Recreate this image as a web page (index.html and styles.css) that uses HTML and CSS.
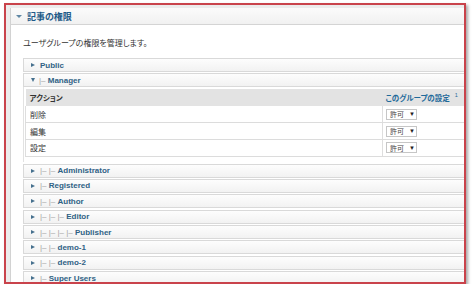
FILE: index.html
```html
<!DOCTYPE html>
<html lang="ja">
<head>
    <meta charset="UTF-8">
    <title>記事の権限</title>
    <link rel="stylesheet" href="styles.css">
</head>
<body>
    <div class="frame">
        <div class="panel">
            <div class="panel-head"><span class="caret"></span>記事の権限</div>
            <div class="panel-body">
                <p class="desc">ユーザグループの権限を管理します。</p>
                <ul class="groups">
                    <li class="group">
                        <div class="group-head"><span class="tri"></span><span class="name">Public</span></div>
                    </li>
                    <li class="group open">
                        <div class="group-head"><span class="tri down"></span><span class="lvl">|– </span><span class="name">Manager</span></div>
                        <div class="rules-wrap">
                            <table class="rules">
                                <thead>
                                    <tr>
                                        <th class="col-action">アクション</th>
                                        <th class="col-setting">このグループの設定<sup>1</sup></th>
                                    </tr>
                                </thead>
                                <tbody>
                                    <tr>
                                        <td>削除</td>
                                        <td class="col-setting"><span class="select">許可<i>▼</i></span></td>
                                    </tr>
                                    <tr>
                                        <td>編集</td>
                                        <td class="col-setting"><span class="select">許可<i>▼</i></span></td>
                                    </tr>
                                    <tr>
                                        <td>設定</td>
                                        <td class="col-setting"><span class="select">許可<i>▼</i></span></td>
                                    </tr>
                                </tbody>
                            </table>
                        </div>
                    </li>
                    <li class="group">
                        <div class="group-head"><span class="tri"></span><span class="lvl">|– |– </span><span class="name">Administrator</span></div>
                    </li>
                    <li class="group">
                        <div class="group-head"><span class="tri"></span><span class="lvl">|– </span><span class="name">Registered</span></div>
                    </li>
                    <li class="group">
                        <div class="group-head"><span class="tri"></span><span class="lvl">|– |– </span><span class="name">Author</span></div>
                    </li>
                    <li class="group">
                        <div class="group-head"><span class="tri"></span><span class="lvl">|– |– |– </span><span class="name">Editor</span></div>
                    </li>
                    <li class="group">
                        <div class="group-head"><span class="tri"></span><span class="lvl">|– |– |– |– </span><span class="name">Publisher</span></div>
                    </li>
                    <li class="group">
                        <div class="group-head"><span class="tri"></span><span class="lvl">|– |– </span><span class="name">demo-1</span></div>
                    </li>
                    <li class="group">
                        <div class="group-head"><span class="tri"></span><span class="lvl">|– |– </span><span class="name">demo-2</span></div>
                    </li>
                    <li class="group">
                        <div class="group-head"><span class="tri"></span><span class="lvl">|– </span><span class="name">Super Users</span></div>
                    </li>
                </ul>
            </div>
        </div>
    </div>
</body>
</html>
```

FILE: styles.css
```css
/* 全体 */
* {
    box-sizing: border-box;
}
body {
    margin: 0;
    background-color: #fff;
    font-family: "Liberation Sans", Arial, "Noto Sans CJK JP", sans-serif;
    color: #333;
    font-feature-settings: "palt";
}

/* 赤い枠 */
.frame {
    margin: 3px 0 0 4px;
    width: 462px;
    height: 281px;
    border: 2px solid #c9434b;
    box-shadow: 2px 2px 3px rgba(0, 0, 0, 0.35);
    background-color: #ececec;
    padding: 3px 0 0 4px;
    overflow: hidden;
}
.panel {
    width: 520px;
    min-height: 400px;
    background-color: #fff;
    border-left: 1px solid #d2d2d2;
}
.panel-head {
    height: 17px;
    display: flex;
    align-items: center;
    padding-left: 5px;
    background: linear-gradient(#fbfbfb, #f1f1f1);
    border-bottom: 1px solid #d4d4d4;
    font-size: 9px;
    font-weight: bold;
    color: #1d5a88;
}
.caret {
    width: 0;
    height: 0;
    border-top: 3.5px solid #5f87a4;
    border-left: 3px solid transparent;
    border-right: 3px solid transparent;
    margin-right: 5px;
}
.panel-body {
    padding-left: 12px;
}
.desc {
    margin: 13px 0 8px;
    font-size: 8px;
    line-height: 12px;
}

/* グループ一覧 */
.groups {
    list-style: none;
    margin: 0;
    padding: 0;
}
.group {
    margin-bottom: 1.4px;
}
.group-head {
    height: 14px;
    display: flex;
    align-items: center;
    padding-left: 7px;
    border: 1px solid #d9d9d9;
    background: linear-gradient(#fdfdfd, #f2f2f2);
    font-size: 8px;
    white-space: pre;
}
.tri {
    width: 0;
    height: 0;
    border-left: 4px solid #46708e;
    border-top: 2.5px solid transparent;
    border-bottom: 2.5px solid transparent;
    margin-right: 5px;
}
.tri.down {
    border-left: 2.5px solid transparent;
    border-right: 2.5px solid transparent;
    border-top: 4px solid #46708e;
    border-bottom: 0;
    margin-right: 4px;
}
.lvl {
    color: #a4a4a4;
}
.name {
    font-weight: bold;
    color: #2f6285;
}

/* 権限テーブル */
.rules-wrap {
    border-left: 1px solid #e2e2e2;
    padding: 1.6px 0 5.6px 1px;
}
.rules {
    border-collapse: collapse;
    width: 480px;
    font-size: 8px;
}
.rules th {
    height: 17px;
    text-align: left;
    font-size: 7.5px;
    font-weight: bold;
    background-color: #e3e3e3;
    padding: 0 0 0 4px;
}
.rules td {
    height: 16.7px;
    padding: 0 0 0 4px;
    border-bottom: 1px solid #dcdcdc;
    border-left: 1px solid #dedede;
}
.col-action {
    width: 357px;
}
.rules .col-setting {
    padding-left: 3px;
}
th.col-setting {
    color: #1f6a9a;
}
.rules sup {
    font-size: 5.5px;
    font-weight: normal;
    margin-left: 5px;
    vertical-align: 4px;
}
.select {
    display: inline-flex;
    align-items: center;
    width: 31px;
    height: 11px;
    padding-left: 3px;
    border: 1px solid #c6c6c6;
    background-color: #fff;
    font-size: 7px;
    color: #444;
}
.select i {
    font-style: normal;
    font-size: 6px;
    margin-left: 5px;
    color: #222;
}
```
